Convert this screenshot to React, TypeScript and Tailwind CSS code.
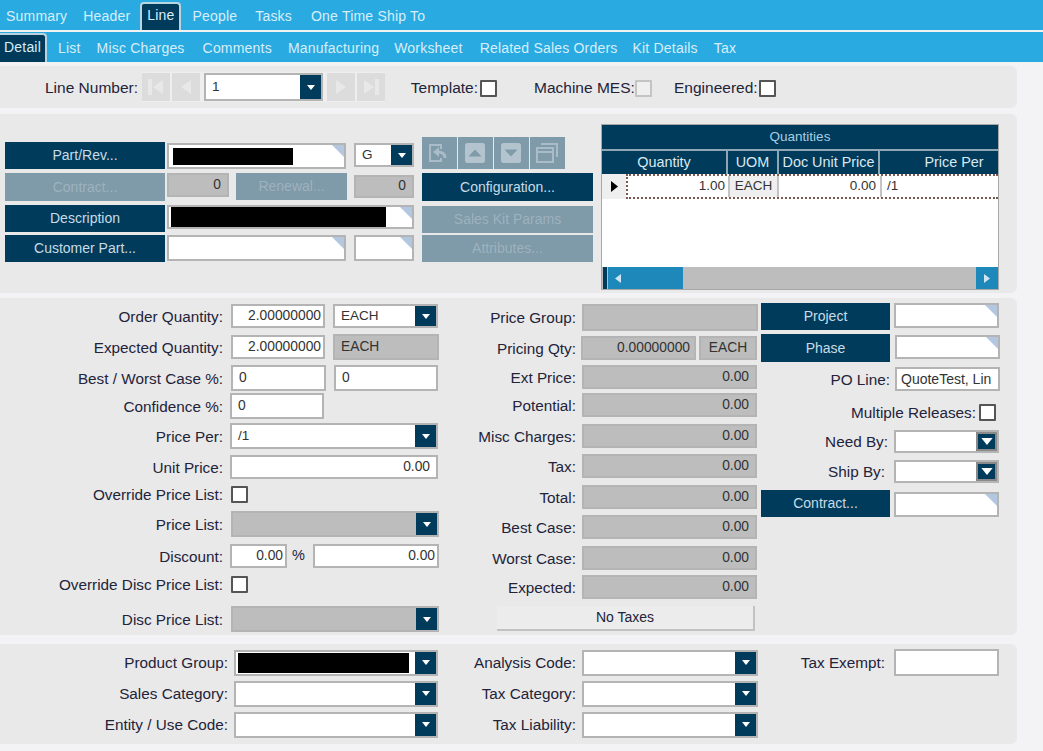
import React from "react";

const NAVY = "bg-[#003b5c]";

function Corner() {
  return <span className="absolute right-0 top-0 h-[12px] w-[12px] bg-[#b3c7e0] [clip-path:polygon(0_0,100%_0,100%_100%)]" />;
}

function Btn({ children, className = "", off }: { children: React.ReactNode; className?: string; off?: boolean }) {
  return (
    <div
      className={`flex items-center justify-center text-[14px] ${
        off ? "bg-[#7f9aa9] text-[#9db2be]" : `${NAVY} text-[#c8dbe6]`
      } ${className}`}
    >
      {children}
    </div>
  );
}

function Field({
  children,
  className = "",
  corner,
  right,
  gray,
}: {
  children?: React.ReactNode;
  className?: string;
  corner?: boolean;
  right?: boolean;
  gray?: boolean;
}) {
  return (
    <div
      className={`relative flex items-center border-2 border-[#b4b4b4] px-[6px] text-[13.8px] text-[#333] ${
        gray ? "bg-[#bdbdbd]" : "bg-white"
      } ${right ? "justify-end" : ""} ${className}`}
    >
      {children}
      {corner && <Corner />}
    </div>
  );
}

function Combo({
  value,
  className = "",
  gray,
  big,
  children,
}: {
  value?: string;
  className?: string;
  gray?: boolean;
  big?: boolean;
  children?: React.ReactNode;
}) {
  return (
    <div className={`flex border-2 border-[#b4b4b4] text-[13.5px] text-[#333] ${gray ? "bg-[#bdbdbd]" : "bg-white"} ${className}`}>
      <div className="flex min-w-0 flex-1 items-center pl-[6px]">
        {value}
        {children}
      </div>
      <div className={`flex w-[21px] items-center justify-center ${NAVY} ${big ? "border-2 border-[#8a8a8a]" : ""}`}>
        <svg width={big ? 12 : 8} height={big ? 7 : 5} viewBox="0 0 8 5">
          <path d="M0 0h8L4 5z" fill="#fff" />
        </svg>
      </div>
    </div>
  );
}

function Check({ off }: { off?: boolean }) {
  return <div className={`h-[17px] w-[17px] rounded-[1px] border-2 ${off ? "border-[#c4c4c4] bg-[#efefef]" : "border-[#555] bg-white"}`} />;
}

function Row({
  h,
  w,
  label,
  children,
}: {
  h: string;
  w: string;
  label?: string;
  children?: React.ReactNode;
}) {
  return (
    <div className={`flex items-center ${h}`}>
      <div className={`shrink-0 whitespace-nowrap pt-[2px] text-right text-[15.3px] text-[#23233a] ${w}`}>{label}</div>
      {children}
    </div>
  );
}

function NavBtn({ d, bar }: { d: string; bar?: "l" | "r" }) {
  return (
    <div className="flex h-[28px] w-[28px] items-center justify-center bg-[#dcdcdc]">
      <svg width="20" height="20" viewBox="0 0 20 20" fill="#e8e8e8">
        <path d={d} />
        {bar === "l" && <rect x="2" y="2" width="4" height="16" />}
        {bar === "r" && <rect x="14" y="2" width="4" height="16" />}
      </svg>
    </div>
  );
}

function Tabs() {
  return (
    <div className="text-[14px] tracking-[0.2px] text-[#d7eef9]">
      <div className="flex h-[30px] items-center bg-[#29abe2]">
        <span className="ml-[6px] pt-[3px]">Summary</span>
        <span className="ml-[16px] pt-[3px]">Header</span>
        <div className="ml-[10px] mt-[2px] flex h-[28px] w-[41px] items-center justify-center rounded-t-[4px] border-2 border-b-0 border-[#b9d3e0] bg-[#003b5c] pb-[3px]">
          Line
        </div>
        <span className="ml-[11px] pt-[3px]">People</span>
        <span className="ml-[18px] pt-[3px]">Tasks</span>
        <span className="ml-[19px] pt-[3px]">One Time Ship To</span>
      </div>
      <div className="mt-[2px] flex h-[30px] items-center bg-[#29abe2]">
        <div className="mt-[1px] flex h-[29px] w-[47px] items-center justify-center rounded-tr-[4px] border-r-2 border-t-2 border-[#b9d3e0] bg-[#003b5c] pb-[3px]">
          Detail
        </div>
        <span className="ml-[11px] pt-[3px]">List</span>
        <span className="ml-[16px] pt-[3px]">Misc Charges</span>
        <span className="ml-[18px] pt-[3px]">Comments</span>
        <span className="ml-[16px] pt-[3px]">Manufacturing</span>
        <span className="ml-[15px] pt-[3px]">Worksheet</span>
        <span className="ml-[17px] pt-[3px]">Related Sales Orders</span>
        <span className="ml-[15px] pt-[3px]">Kit Details</span>
        <span className="ml-[16px] pt-[3px]">Tax</span>
      </div>
    </div>
  );
}

function LinePanel() {
  return (
    <div className="mt-[4px] flex h-[42px] w-[1017px] items-center rounded-r-[6px] bg-[#e9e9e9] pt-[2px] text-[15.5px] text-[#23233a]">
      <span className="ml-[45px] w-[97px] whitespace-nowrap">Line Number:</span>
      <div className="-mt-[2px] flex items-center gap-[2px] bg-[#eeeeee] py-[1px]">
        <NavBtn d="M17 3v14L7 10z" bar="l" />
        <NavBtn d="M15 3v14L5 10z" />
        <Combo value="1" className="mx-[2px] h-[28px] w-[119px]" />
        <NavBtn d="M5 3v14l10-7z" />
        <NavBtn d="M3 3v14l10-7z" bar="r" />
      </div>
      <span className="ml-[24px] w-[69px] whitespace-nowrap text-right">Template:</span>
      <div className="ml-[2px]"><Check /></div>
      <span className="ml-[37px] w-[99px] whitespace-nowrap text-right">Machine MES:</span>
      <div className="ml-[2px]"><Check off /></div>
      <span className="ml-[22px] w-[83px] whitespace-nowrap text-right">Engineered:</span>
      <div className="ml-[2px]"><Check /></div>
    </div>
  );
}

function IconBtn({ children }: { children: React.ReactNode }) {
  return <div className="flex h-[32px] w-[34.5px] items-center justify-center bg-[#7f9aa9]">{children}</div>;
}

function PartPanel() {
  return (
    <div className="mt-[6px] flex h-[179px] w-[1017px] rounded-r-[6px] bg-[#e9e9e9]">
      <div className="ml-[5px] mt-[28px] w-[409px]">
        <div className="flex h-[27px] gap-[2px]">
          <Btn className="w-[160px]">Part/Rev...</Btn>
          <Field corner className="mt-[1px] h-[26px] w-[179px] !px-[4px]">
            <div className="h-[17px] w-[120px] bg-black" />
          </Field>
          <Combo value="G" className="ml-[6px] mt-[1px] h-[24px] w-[60px]" />
        </div>
        <div className="mt-[4px] flex h-[28px] gap-[2px]">
          <Btn off className="w-[160px]">Contract...</Btn>
          <Field gray right className="h-[24px] w-[62px]">0</Field>
          <Btn off className="ml-[5px] h-[27px] w-[111px]">Renewal...</Btn>
          <Field gray right className="ml-[5px] mt-[2px] h-[23px] w-[60px]">0</Field>
        </div>
        <div className="mt-[4px] flex h-[27px] gap-[2px]">
          <Btn className="w-[160px]">Description</Btn>
          <Field corner className="h-[24px] w-[247px] !px-[2px]">
            <div className="h-[20px] w-[215px] bg-black" />
          </Field>
        </div>
        <div className="mt-[3px] flex h-[27px] gap-[2px]">
          <Btn className="w-[160px]">Customer Part...</Btn>
          <Field corner className="h-[26px] w-[179px]" />
          <Field corner className="ml-[6px] h-[26px] w-[60px]" />
        </div>
      </div>
      <div className="ml-[8px] mt-[23px] w-[171px]">
        <div className="flex gap-[1.5px]">
          <IconBtn>
            <svg width="24" height="24" viewBox="0 0 24 24" fill="none" stroke="#a9bcc7" strokeWidth="2">
              <path d="M14 8V4H3v16h11v-3" />
              <path d="M18 17c0-4-3-6-7-6H9" strokeWidth="3" />
              <path d="M12 6l-6 5 6 5z" fill="#a9bcc7" stroke="none" />
            </svg>
          </IconBtn>
          <IconBtn>
            <svg width="20" height="20" viewBox="0 0 20 20">
              <rect width="20" height="20" rx="2.5" fill="#b3c4ce" />
              <path d="M3.5 13.5h13L10 6.5z" fill="#7f9aa9" />
            </svg>
          </IconBtn>
          <IconBtn>
            <svg width="20" height="20" viewBox="0 0 20 20">
              <rect width="20" height="20" rx="2.5" fill="#b3c4ce" />
              <path d="M3.5 6.5h13L10 13.5z" fill="#7f9aa9" />
            </svg>
          </IconBtn>
          <IconBtn>
            <svg width="22" height="20" viewBox="0 0 22 20" fill="none" stroke="#a9bcc7" strokeWidth="2">
              <rect x="1" y="5" width="16" height="14" />
              <path d="M1 9h16" />
              <path d="M5 1h16v13" />
            </svg>
          </IconBtn>
        </div>
        <Btn className="mt-[4px] h-[28px]">Configuration...</Btn>
        <Btn off className="mt-[5px] h-[27px]">Sales Kit Params</Btn>
        <Btn off className="mt-[2px] h-[27px]">Attributes...</Btn>
      </div>
      <QuantGrid />
    </div>
  );
}

function QuantGrid() {
  return (
    <div className="ml-[8px] mt-[10px] flex h-[166px] w-[398px] flex-col border border-[#a8a8a8] bg-white text-[14.4px]">
      <div className={`flex h-[24px] items-center justify-center ${NAVY} text-[13.5px] text-[#a9cde0]`}>Quantities</div>
      <div className={`grid h-[25px] grid-cols-[124px_51px_101px_1fr] border-t-2 border-[#8fa6b4] ${NAVY} text-[#dbe8ef]`}>
        <div className="flex items-center justify-center">Quantity</div>
        <div className="flex items-center justify-center border-l-2 border-[#8fa6b4]">UOM</div>
        <div className="flex items-center justify-center border-l-2 border-[#8fa6b4]">Doc Unit Price</div>
        <div className="flex items-center justify-center border-l-2 border-[#8fa6b4] pl-[30px]">Price Per</div>
      </div>
      <div className="flex h-[25px] text-[13.5px] text-[#333]">
        <div className="flex w-[24px] items-center justify-center bg-[#efefef]">
          <svg width="7" height="11" viewBox="0 0 7 11">
            <path d="M0 0l7 5.5L0 11z" fill="#000" />
          </svg>
        </div>
        <div className="grid flex-1 grid-cols-[100px_51px_101px_1fr] border-y-2 border-l-2 border-dotted border-[#7a5a50]">
          <div className="flex items-center justify-end pr-[3px]">1.00</div>
          <div className="flex items-center justify-center border-x-2 border-[#c4c4c4] bg-[#efefef]">EACH</div>
          <div className="flex items-center justify-end pr-[4px]">0.00</div>
          <div className="flex items-center border-l-2 border-[#c4c4c4] pl-[5px]">/1</div>
        </div>
      </div>
      <div className="flex-1" />
      <div className="flex h-[22px] items-stretch bg-[#bdbdbd]">
        <div className="ml-[1px] w-[4px] bg-[#003b5c]" />
        <div className="ml-[1px] flex w-[75px] items-center bg-[#1f88bb] pl-[7px]">
          <svg width="6" height="9" viewBox="0 0 6 9">
            <path d="M6 0v9L0 4.5z" fill="#cfe6f2" />
          </svg>
        </div>
        <div className="flex-1" />
        <div className="flex w-[22px] items-center justify-center bg-[#1f88bb]">
          <svg width="6" height="9" viewBox="0 0 6 9">
            <path d="M0 0v9l6-4.5z" fill="#cfe6f2" />
          </svg>
        </div>
      </div>
    </div>
  );
}

function MidRow({ h, label, value = "0.00" }: { h: string; label: string; value?: string }) {
  return (
    <Row h={h} w="w-[136px]" label={label}>
      <Field gray right className="ml-[6px] h-[24px] w-[175px]">{value}</Field>
    </Row>
  );
}

function PricePanel() {
  const lw = "w-[223px]";
  return (
    <div className="mt-[5px] flex h-[337px] w-[1017px] rounded-r-[6px] bg-[#e9e9e9] pt-[3px]">
      <div className="w-[440px]">
        <Row h="h-[30px]" w={lw} label="Order Quantity:">
          <Field right className="ml-[8px] h-[24px] w-[94px] !px-[2px]">2.00000000</Field>
          <Combo value="EACH" className="ml-[8px] h-[24px] w-[105px]" />
        </Row>
        <Row h="h-[32px]" w={lw} label="Expected Quantity:">
          <Field right className="ml-[8px] h-[24px] w-[94px] !px-[2px]">2.00000000</Field>
          <Field gray className="ml-[8px] h-[26px] w-[106px]">EACH</Field>
        </Row>
        <Row h="h-[30px]" w={lw} label="Best / Worst Case %:">
          <Field className="ml-[8px] h-[26px] w-[95px]">0</Field>
          <Field className="ml-[8px] h-[26px] w-[104px]">0</Field>
        </Row>
        <Row h="h-[26px]" w={lw} label="Confidence %:">
          <Field className="ml-[7px] h-[26px] w-[94px]">0</Field>
        </Row>
        <Row h="h-[34px]" w={lw} label="Price Per:">
          <Combo value="/1" className="ml-[7px] h-[26px] w-[208px]" />
        </Row>
        <Row h="h-[28px]" w={lw} label="Unit Price:">
          <Field right className="ml-[7px] h-[24px] w-[208px]">0.00</Field>
        </Row>
        <Row h="h-[26px]" w={lw} label="Override Price List:">
          <div className="ml-[8px]"><Check /></div>
        </Row>
        <Row h="h-[34px]" w={lw} label="Price List:">
          <Combo gray className="ml-[8px] h-[26px] w-[208px]" />
        </Row>
        <Row h="h-[30px]" w={lw} label="Discount:">
          <Field right className="ml-[7px] h-[24px] w-[57px] !px-[2px]">0.00</Field>
          <span className="ml-[5px] w-[21px] text-[14.5px] text-[#23233a]">%</span>
          <Field right className="h-[24px] w-[126px] !px-[2px]">0.00</Field>
        </Row>
        <Row h="h-[26px]" w={lw} label="Override Disc Price List:">
          <div className="ml-[8px]"><Check /></div>
        </Row>
        <div className="mt-[6px]">
          <Row h="h-[32px]" w={lw} label="Disc Price List:">
            <Combo gray className="ml-[8px] h-[26px] w-[208px]" />
          </Row>
        </div>
      </div>
      <div className="w-[321px]">
        <Row h="h-[32px]" w="w-[136px]" label="Price Group:">
          <Field gray className="ml-[6px] h-[27px] w-[176px]" />
        </Row>
        <Row h="h-[30px]" w="w-[136px]" label="Pricing Qty:">
          <Field gray right className="ml-[5px] h-[24px] w-[115px] !px-[4px]">0.00000000</Field>
          <Field gray className="ml-[3px] h-[24px] w-[58px] justify-center">EACH</Field>
        </Row>
        <MidRow h="h-[28px]" label="Ext Price:" />
        <MidRow h="h-[28px]" label="Potential:" />
        <MidRow h="h-[34px]" label="Misc Charges:" />
        <MidRow h="h-[26px]" label="Tax:" />
        <MidRow h="h-[36px]" label="Total:" />
        <MidRow h="h-[24px]" label="Best Case:" />
        <MidRow h="h-[38px]" label="Worst Case:" />
        <MidRow h="h-[20px]" label="Expected:" />
        <div className="ml-[57px] mt-[9px] flex h-[25px] w-[258px] items-center justify-center border-b-2 border-r-2 border-[#c2c2c2] bg-[#ececec] text-[14px] text-[#23233a]">
          No Taxes
        </div>
      </div>
      <div className="w-[240px] text-[#23233a]">
        <div className="mt-[2px] flex h-[27px] gap-[4px]">
          <Btn className="w-[129px]">Project</Btn>
          <Field corner className="h-[25px] w-[105px]" />
        </div>
        <div className="mt-[4px] flex h-[28px] gap-[5px]">
          <Btn className="w-[129px]">Phase</Btn>
          <Field corner className="mt-[1px] h-[24px] w-[105px]" />
        </div>
        <div className="mt-[5px] flex h-[24px] items-center">
          <span className="w-[129px] pt-[2px] text-right text-[15.3px]">PO Line:</span>
          <Field className="ml-[5px] h-[24px] w-[105px] overflow-hidden whitespace-nowrap !px-[4px] !text-[14px]">QuoteTest, Lin</Field>
        </div>
        <div className="mt-[11px] flex h-[20px] items-center">
          <span className="w-[215px] whitespace-nowrap pt-[2px] text-right text-[15.3px]">Multiple Releases:</span>
          <div className="ml-[3px]"><Check /></div>
        </div>
        <div className="mt-[8px] flex h-[23px] items-center">
          <span className="w-[127px] pt-[2px] text-right text-[15.3px]">Need By:</span>
          <Combo big className="ml-[6px] h-[23px] w-[105px]" />
        </div>
        <div className="mt-[7px] flex h-[23px] items-center">
          <span className="w-[124px] pt-[2px] text-right text-[15.3px]">Ship By:</span>
          <Combo big className="ml-[9px] h-[23px] w-[105px]" />
        </div>
        <div className="mt-[7px] flex h-[27px] gap-[4px]">
          <Btn className="w-[129px]">Contract...</Btn>
          <Field corner className="mt-[2px] h-[25px] w-[105px]" />
        </div>
      </div>
    </div>
  );
}

function CodePanel() {
  return (
    <div className="mt-[9px] flex h-[100px] w-[1017px] rounded-r-[6px] bg-[#e9e9e9] pt-[3px]">
      <div className="w-[440px]">
        <Row h="h-[31px]" w="w-[228px]" label="Product Group:">
          <Combo className="ml-[6px] h-[26px] w-[204px] [&>div:first-child]:!pl-[2px]">
            <div className="h-[20px] w-[171px] bg-black" />
          </Combo>
        </Row>
        <Row h="h-[31px]" w="w-[228px]" label="Sales Category:">
          <Combo className="ml-[6px] h-[26px] w-[204px]" />
        </Row>
        <Row h="h-[31px]" w="w-[228px]" label="Entity / Use Code:">
          <Combo className="ml-[6px] h-[26px] w-[204px]" />
        </Row>
      </div>
      <div className="w-[321px]">
        <Row h="h-[31px]" w="w-[136px]" label="Analysis Code:">
          <Combo className="ml-[6px] h-[26px] w-[176px]" />
        </Row>
        <Row h="h-[31px]" w="w-[136px]" label="Tax Category:">
          <Combo className="ml-[6px] h-[26px] w-[176px]" />
        </Row>
        <Row h="h-[31px]" w="w-[136px]" label="Tax Liability:">
          <Combo className="ml-[6px] h-[26px] w-[176px]" />
        </Row>
      </div>
      <Row h="h-[31px]" w="w-[124px]" label="Tax Exempt:">
        <Field className="ml-[9px] h-[27px] w-[105px]" />
      </Row>
    </div>
  );
}

export default function App() {
  return (
    <div className="h-[751px] w-[1043px] overflow-hidden bg-[#f3f3f6] font-['Liberation_Sans',Arial,sans-serif]">
      <Tabs />
      <LinePanel />
      <PartPanel />
      <PricePanel />
      <CodePanel />
    </div>
  );
}
